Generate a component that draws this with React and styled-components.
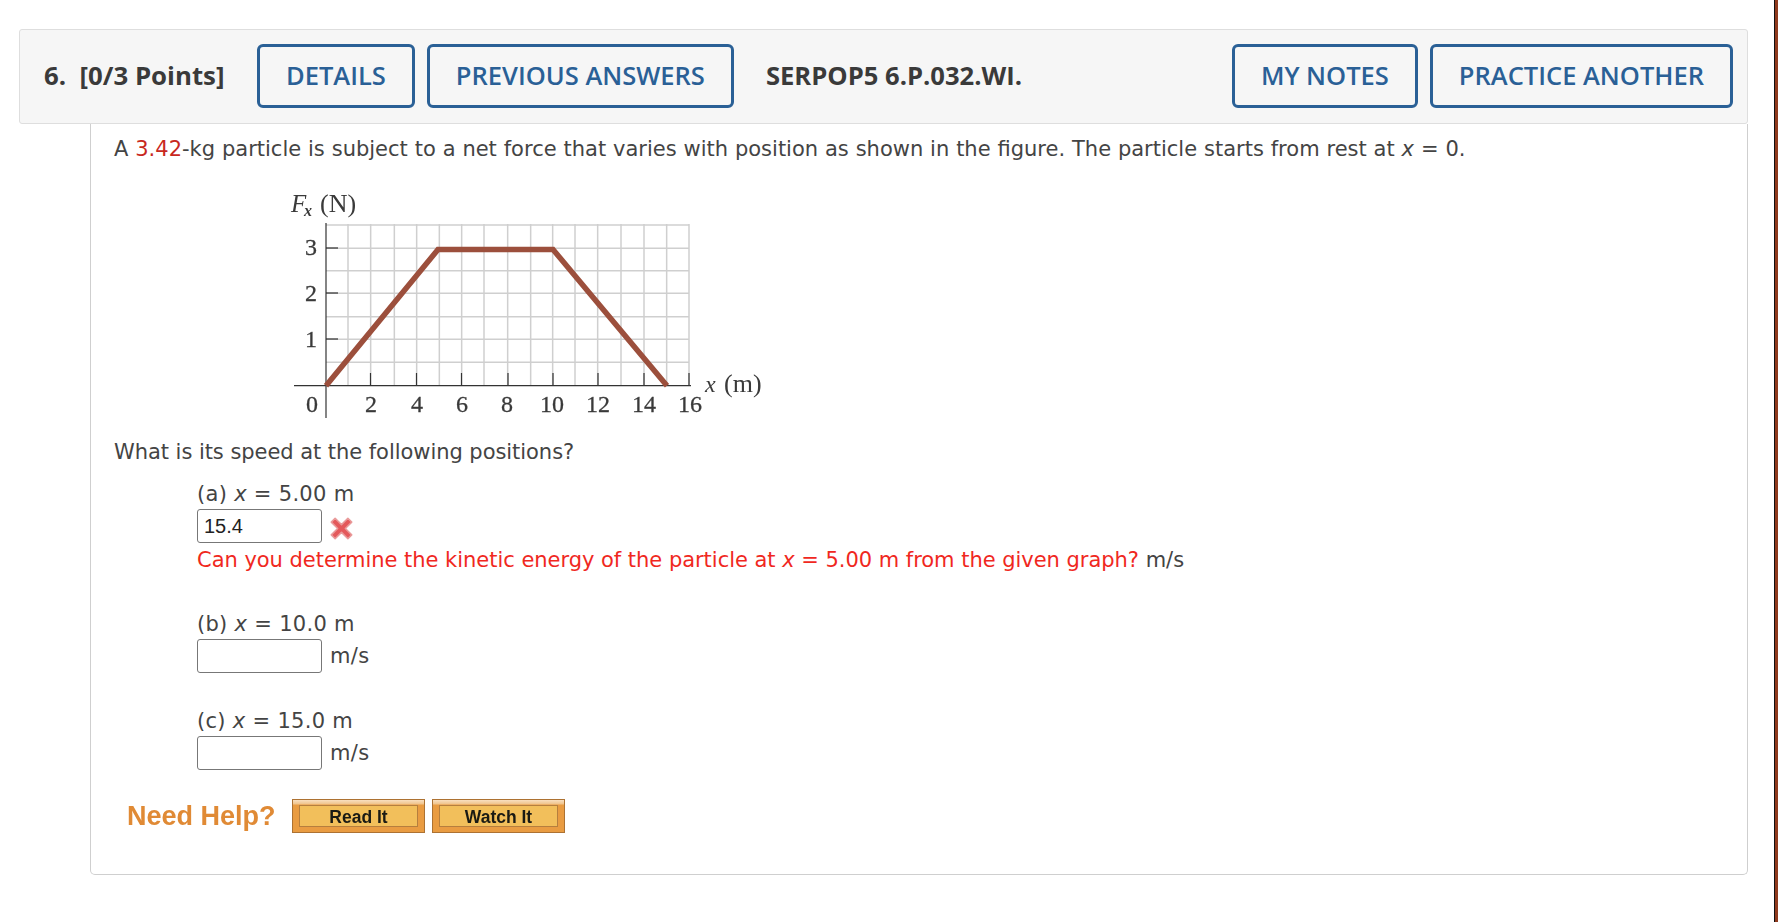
import React from "react";
import styled, { createGlobalStyle } from "styled-components";

const Global = createGlobalStyle`
  html, body { margin: 0; padding: 0; background: #fff; }
  body { font-family: "DejaVu Sans", Verdana, sans-serif; }
`;
const Shell = styled.div`display: flex; height: 922px; overflow: hidden;`;
const Main = styled.main`flex: 1; min-width: 0; padding: 29px 26px 0 19px;`;
const WindowEdge = styled.div`
  width: 3px; flex: none; background: #8f3a1e; border-left: 1px solid #111;
`;
const Header = styled.header`
  display: flex; align-items: center; height: 95px; box-sizing: border-box;
  padding: 0 14px 2px 24px; background: #f6f6f6; border: 1px solid #dedede; border-radius: 3px;
  font-family: "Open Sans", sans-serif; font-weight: 600; font-size: 25.5px; color: #3a3a3a;
`;
const QuestionNo = styled.span`font-weight: 700; white-space: pre; width: 213px; flex: none; font-size: 25.8px; padding-bottom: 2px;`;
const HeadButton = styled.button`
  height: 64px; padding: 0 26px 2px; margin-right: ${p => p.$gap ?? 12}px; flex: none;
  border: 3px solid #2a6096; border-radius: 6px; background: transparent;
  color: #2a6096; font: inherit; white-space: nowrap;
`;
const Code = styled.span`font-weight: 700; margin-left: 20px; flex: 1; font-size: 25.6px;`;
const Panel = styled.section`
  margin-left: 71px; padding: 10px 0 41px 23px; border: 1px solid #cfcfcf; border-top: 0;
  border-radius: 0 0 5px 5px; font-size: 21px; line-height: 30px; color: #444;
`;
const Line = styled.div`margin-top: ${p => p.$top || 0}px; white-space: nowrap;`;
const Statement = styled(Line)`word-spacing: 0.2px;`;
const Prompt = styled(Line)`letter-spacing: -0.05px;`;
const PartLabel = styled(Line)`letter-spacing: 0.3px;`;
const Value = styled.span`color: #c8281e;`;
const Var = styled.i`font-style: italic;`;
const Graph = styled.svg`
  display: block; margin: 26px 0 0 166px; filter: blur(0.35px);
`;
const Parts = styled.div`margin-left: 83px;`;
const AnswerRow = styled.div`display: flex; align-items: center; gap: 8px; height: 34px; letter-spacing: 0.3px;`;
const Answer = styled.div`
  box-sizing: border-box; width: 125px; height: 34px; padding-left: 6px; border: 1px solid #777;
  border-radius: 3px; font: 20px/32px "Liberation Sans", Arial, sans-serif; letter-spacing: 0; color: #222;
`;
const Mark = styled.svg`margin-top: 4px;`;
const Hint = styled.span`color: #f0281e; letter-spacing: -0.03px;`;
const Help = styled.div`
  display: flex; align-items: center; margin: 29px 0 0 13px; height: 34px; filter: blur(0.3px);
`;
const HelpLabel = styled.span`
  font: bold 27px "Liberation Sans", Arial, sans-serif; color: #e08a35; width: 165px; flex: none;
`;
const HelpButton = styled.div`
  box-sizing: border-box; width: 133px; height: 34px; margin-right: 7px; padding: 5px 6px;
  border: 1px solid #ad7232; background: linear-gradient(#f8dfc0 0, #f0c48c 4px, #e99c42 5px);
`;
const HelpFace = styled.div`
  height: 100%; box-sizing: border-box; border: 1px solid #b67f3e; background: #f2bf5b; text-align: center;
  font: bold 17.5px/22px "Liberation Sans", Arial, sans-serif; color: #1a1a14;
`;

const gridX = [234, 302, 373, 440, 508, 575, 642, 713, 782, 848, 915, 983, 1053, 1122, 1190, 1257].map(v => 270 + v / 3);
const gridY = [135, 205, 272, 340, 410, 478, 547].map(v => 180 + v / 3);
const ticks = [370.5, 416.5, 461.5, 508, 553, 598, 644, 689];
const xLabels = [["2", 371], ["4", 417], ["6", 462], ["8", 507], ["10", 552], ["12", 598], ["14", 644], ["16", 690]];
const yLabels = [["3", 255], ["2", 301], ["1", 347]];

const ForceGraph = () => (
  <Graph width="490" height="240" viewBox="280 190 490 240" fontFamily="'Liberation Serif', serif" fontSize="24" fill="#3a3a3a">
    {gridX.map(x => <line key={x} x1={x} x2={x} y1="224" y2="385" stroke="#cfcfcf" strokeWidth="1.5" />)}
    {gridY.map(y => <line key={y} x1="326" x2="689" y1={y} y2={y} stroke="#cfcfcf" strokeWidth="1.5" />)}
    <line x1="294" x2="691" y1="385.7" y2="385.7" stroke="#333" strokeWidth="1.2" />
    <line x1="326" x2="326" y1="223" y2="418" stroke="#333" strokeWidth="1.2" />
    {ticks.map(x => <line key={x} x1={x} x2={x} y1="373" y2="385" stroke="#333" strokeWidth="1.2" />)}
    {[248, 293, 339].map(y => <line key={y} x1="326" x2="338" y1={y} y2={y} stroke="#333" strokeWidth="1.2" />)}
    <polyline points="326,385.7 438,249.5 553,249.5 667,385.7" fill="none" stroke="#9c4f3c" strokeWidth="5.5" />
    <text x="291" y="212" fontSize="25" fontStyle="italic">F</text>
    <text x="304" y="216" fontSize="16" fontStyle="italic" fontWeight="bold">x</text>
    <text x="320" y="212" fontSize="26">(N)</text>
    {yLabels.map(([t, y]) => <text key={t} x="311" y={y} textAnchor="middle" stroke="#3a3a3a" strokeWidth="0.3">{t}</text>)}
    <text x="312" y="412" textAnchor="middle" stroke="#3a3a3a" strokeWidth="0.3">0</text>
    {xLabels.map(([t, x]) => <text key={t} x={x} y="412" textAnchor="middle" stroke="#3a3a3a" strokeWidth="0.3">{t}</text>)}
    <text x="705" y="392" fontSize="24" fontStyle="italic">x</text>
    <text x="724" y="392" fontSize="26">(m)</text>
  </Graph>
);

const WrongMark = () => (
  <Mark width="23" height="23" viewBox="3 3 18 18" aria-hidden="true">
    <path d="M4 7 L7 4 L12 9 L17 4 L20 7 L15 12 L20 17 L17 20 L12 15 L7 20 L4 17 L9 12 Z"
      fill="#e4595b" stroke="#e99a9a" strokeWidth="1.2" strokeLinejoin="round" />
  </Mark>
);

export default function App() {
  return (
    <Shell>
      <Global />
      <Main>
        <Header>
          <QuestionNo>{"6.  [0/3 Points]"}</QuestionNo>
          <HeadButton>DETAILS</HeadButton>
          <HeadButton>PREVIOUS ANSWERS</HeadButton>
          <Code>SERPOP5 6.P.032.WI.</Code>
          <HeadButton>MY NOTES</HeadButton>
          <HeadButton $gap={0}>PRACTICE ANOTHER</HeadButton>
        </Header>
        <Panel>
          <Statement>
            A <Value>3.42</Value>-kg particle is subject to a net force that varies with position as shown in the figure. The particle starts from rest at <Var>x</Var> = 0.
          </Statement>
          <ForceGraph />
          <Prompt $top={7}>What is its speed at the following positions?</Prompt>
          <Parts>
            <PartLabel $top={12}>(a) <Var>x</Var> = 5.00 m</PartLabel>
            <AnswerRow><Answer>15.4</Answer><WrongMark /></AnswerRow>
            <Line $top={2}>
              <Hint>Can you determine the kinetic energy of the particle at <Var>x</Var> = 5.00 m from the given graph?</Hint> m/s
            </Line>
            <PartLabel $top={34}>(b) <Var>x</Var> = 10.0 m</PartLabel>
            <AnswerRow><Answer />m/s</AnswerRow>
            <PartLabel $top={33}>(c) <Var>x</Var> = 15.0 m</PartLabel>
            <AnswerRow><Answer />m/s</AnswerRow>
          </Parts>
          <Help>
            <HelpLabel>Need Help?</HelpLabel>
            <HelpButton><HelpFace>Read It</HelpFace></HelpButton>
            <HelpButton><HelpFace>Watch It</HelpFace></HelpButton>
          </Help>
        </Panel>
      </Main>
      <WindowEdge />
    </Shell>
  );
}
